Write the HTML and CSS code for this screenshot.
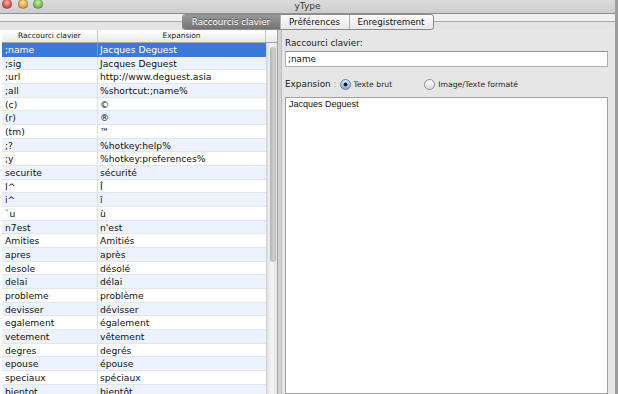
FILE: index.html
```html
<!DOCTYPE html>
<html lang="fr">
<head>
  <meta charset="UTF-8">
  <title>yType</title>
  <link rel="stylesheet" href="styles.css">
</head>
<body>
  <div class="window">

    <!-- Title bar -->
    <div class="titlebar">
      <div class="lights">
        <span class="light red"></span>
        <span class="light yellow"></span>
        <span class="light green"></span>
      </div>
      <div class="title">yType</div>
      <div></div>
    </div>

    <!-- Tabs -->
    <div class="tabstrip">
      <div class="tabs">
        <div class="tab active t1">Raccourcis clavier</div>
        <div class="tab t2">Préférences</div>
        <div class="tab t3">Enregistrement</div>
      </div>
    </div>

    <div class="main">
      <!-- Shortcut list -->
      <div class="list">
        <div class="thead">
          <div class="th c1">Raccourci clavier</div>
          <div class="th c2">Expansion</div>
          <div class="th corner"></div>
        </div>
        <div class="tbody">
          <div class="rows">
            <div class="row sel"><div class="c1">;name</div><div class="c2">Jacques Deguest</div></div>
            <div class="row"><div class="c1">;sig</div><div class="c2">Jacques Deguest</div></div>
            <div class="row"><div class="c1">;url</div><div class="c2">http://www.deguest.asia</div></div>
            <div class="row"><div class="c1">;all</div><div class="c2">%shortcut:;name%</div></div>
            <div class="row"><div class="c1">(c)</div><div class="c2">©</div></div>
            <div class="row"><div class="c1">(r)</div><div class="c2">®</div></div>
            <div class="row"><div class="c1">(tm)</div><div class="c2">™</div></div>
            <div class="row"><div class="c1">;?</div><div class="c2">%hotkey:help%</div></div>
            <div class="row"><div class="c1">;y</div><div class="c2">%hotkey:preferences%</div></div>
            <div class="row"><div class="c1">securite</div><div class="c2">sécurité</div></div>
            <div class="row"><div class="c1">I^</div><div class="c2">Î</div></div>
            <div class="row"><div class="c1">i^</div><div class="c2">î</div></div>
            <div class="row"><div class="c1">`u</div><div class="c2">ù</div></div>
            <div class="row"><div class="c1">n7est</div><div class="c2">n'est</div></div>
            <div class="row"><div class="c1">Amities</div><div class="c2">Amitiés</div></div>
            <div class="row"><div class="c1">apres</div><div class="c2">après</div></div>
            <div class="row"><div class="c1">desole</div><div class="c2">désolé</div></div>
            <div class="row"><div class="c1">delai</div><div class="c2">délai</div></div>
            <div class="row"><div class="c1">probleme</div><div class="c2">problème</div></div>
            <div class="row"><div class="c1">devisser</div><div class="c2">dévisser</div></div>
            <div class="row"><div class="c1">egalement</div><div class="c2">également</div></div>
            <div class="row"><div class="c1">vetement</div><div class="c2">vêtement</div></div>
            <div class="row"><div class="c1">degres</div><div class="c2">degrés</div></div>
            <div class="row"><div class="c1">epouse</div><div class="c2">épouse</div></div>
            <div class="row"><div class="c1">speciaux</div><div class="c2">spéciaux</div></div>
            <div class="row"><div class="c1">bientot</div><div class="c2">bientôt</div></div>
          </div>
          <div class="scrollbar"><div class="knob"></div></div>
        </div>
      </div>

      <div class="divider"></div>

      <!-- Editor -->
      <div class="editor">
        <div class="label">Raccourci clavier:</div>
        <div class="field">;name</div>
        <div class="exp-row">
          <span class="exp-label">Expansion <span class="colon">:</span></span>
          <span class="radio on"></span>
          <span class="radio-text">Texte brut</span>
          <span class="radio second"></span>
          <span class="radio-text">Image/Texte formaté</span>
        </div>
        <div class="textarea">Jacques Deguest</div>
      </div>
    </div>

  </div>
</body>
</html>
```

FILE: styles.css
```css
/* ====== RESET ====== */
html, body {
  margin: 0;
  padding: 0;
}

body {
  width: 618px;
  height: 394px;
  overflow: hidden;
  background: #9d9d9d;
  font-family: "DejaVu Sans", sans-serif;
  color: #111;
}

.window {
  width: 615px;
  height: 394px;
  display: flex;
  flex-direction: column;
  background: #e6e6e6;
}

/* ====== TITLE BAR ====== */
.titlebar {
  flex: none;
  height: 13px;
  display: grid;
  grid-template-columns: 1fr auto 1fr;
  background: linear-gradient(#dcdcdc, #cdcdcd);
  border-bottom: 1px solid #8f8f8f;
}

.lights {
  display: flex;
  gap: 5.5px;
  padding-left: 2px;
  margin-top: -1px;
}

.light {
  width: 10px;
  height: 10px;
  border-radius: 50%;
  box-sizing: border-box;
  border: 1px solid rgba(0, 0, 0, 0.25);
}
.red { background: radial-gradient(circle at 50% 30%, #fbb3ad, #dc5a52 60%, #b03c35); }
.yellow { background: radial-gradient(circle at 50% 30%, #fde1a6, #e9ab3f 60%, #b98025); }
.green { background: radial-gradient(circle at 50% 30%, #cdeeb0, #84c15b 60%, #55903a); }

.title {
  font-size: 9px;
  line-height: 13px;
  color: #3a3a3a;
}

/* ====== TABS ====== */
.tabstrip {
  flex: none;
  height: 16px;
  display: flex;
  justify-content: center;
  background: linear-gradient(#f0f0f0 0 7px, #a9a9a9 7px 8px, #e4e4e4 8px);
}

.tabs {
  display: flex;
  height: 16px;
  box-sizing: border-box;
  border: 1px solid #8b8b8b;
  border-radius: 3px;
  overflow: hidden;
  background: linear-gradient(#fdfdfd, #e8e8e8);
}

.tab {
  font-size: 8.7px;
  line-height: 14px;
  text-align: center;
  color: #111;
  box-sizing: border-box;
  border-left: 1px solid #b3b3b3;
}
.tab.active {
  border-left: none;
  color: #fff;
  background: linear-gradient(#989898, #737373);
  text-shadow: 0 -1px 0 #555;
}
.t1 { width: 97px; }
.t2 { width: 69px; }
.t3 { width: 84px; }

/* ====== MAIN ====== */
.main {
  flex: 1;
  display: flex;
  min-height: 0;
}

.list {
  width: 275px;
  padding-left: 2px;
  display: flex;
  flex-direction: column;
  background: #fff;
}

.thead {
  flex: none;
  display: flex;
  height: 13px;
  box-sizing: border-box;
  background: linear-gradient(#ffffff, #e9e9e9);
  border-bottom: 1px solid #a6a6a6;
}

.th {
  font-size: 7.4px;
  line-height: 12px;
  text-align: center;
  color: #222;
}
.th.c1 {
  width: 96px;
  box-sizing: border-box;
  border-right: 1px solid #c6c6c6;
}
.th.c2 {
  width: 168px;
  box-sizing: border-box;
  border-right: 1px solid #c6c6c6;
}
.th.corner {
  flex: 1;
}

.tbody {
  flex: 1;
  display: flex;
  min-height: 0;
}

.rows {
  width: 264px;
}

.row {
  display: flex;
  height: 13.68px;
  box-sizing: border-box;
  padding-top: 1px;
  border-bottom: 1px solid #e3e7ec;
  font-size: 9.2px;
  line-height: 12px;
  white-space: nowrap;
}
.row:nth-child(even) {
  background: #edf3fe;
}
.row .c1 {
  width: 96px;
  box-sizing: border-box;
  padding-left: 3px;
  margin-top: -1px;
  padding-top: 1px;
  border-right: 1px solid #dfe3e8;
}
.row .c2 {
  flex: 1;
  padding-left: 2px;
}
.row.sel {
  background: #3b7ad9;
  color: #fff;
  border-bottom-color: #3b7ad9;
}
.row.sel .c1 {
  border-right-color: #6a9ae2;
}

.scrollbar {
  flex: 1;
  box-sizing: border-box;
  border-left: 1px solid #d0d0d0;
  background: linear-gradient(to right, #e2e2e2, #f5f5f5 50%, #e4e4e4);
}

.knob {
  width: 6px;
  height: 215px;
  margin: 4px 0 0 3px;
  border-radius: 3px;
  background: linear-gradient(to right, #b2b2b2, #cfcfcf 60%, #bdbdbd);
}

.divider {
  width: 5px;
  box-sizing: border-box;
  background: #d2d2d2;
  border-left: 1px solid #a2a2a2;
  border-right: 1px solid #bcbcbc;
}

/* ====== EDITOR ====== */
.editor {
  flex: 1;
  display: flex;
  flex-direction: column;
  padding: 8px 7px 0 3px;
  background: #e6e6e6;
}

.label {
  font-size: 8.8px;
  line-height: 11px;
  color: #1a1a1a;
}

.field {
  margin-top: 2px;
  height: 16px;
  box-sizing: border-box;
  padding-left: 2px;
  background: #fff;
  border: 1px solid #b0b0b0;
  border-top-color: #8e8e8e;
  font-size: 8.8px;
  line-height: 14px;
}

.exp-row {
  display: flex;
  align-items: center;
  height: 14px;
  margin-top: 10px;
}

.exp-label {
  font-size: 8.9px;
  color: #1a1a1a;
}
.colon {
  color: #a0a0a0;
}

.radio {
  width: 11px;
  height: 11px;
  margin-left: 3px;
  box-sizing: border-box;
  border-radius: 50%;
  border: 1px solid #8d8d8d;
  background: linear-gradient(#ffffff, #dcdcdc);
}
.radio.on {
  border-color: #5b7ea6;
  background: radial-gradient(circle, #1a1a1a 0 1.6px, transparent 2.3px),
              linear-gradient(#d9e8fb, #7cb1ea);
}
.radio.second {
  margin-left: 32px;
}

.radio-text {
  margin-left: 3px;
  font-size: 7.7px;
  color: #1a1a1a;
}

.textarea {
  flex: 1;
  margin-top: 6px;
  padding: 1px 3px;
  background: #fff;
  border: 1px solid #a0a0a0;
  font-family: "Liberation Sans", Arial, sans-serif;
  font-size: 9px;
  line-height: 11px;
}
```
